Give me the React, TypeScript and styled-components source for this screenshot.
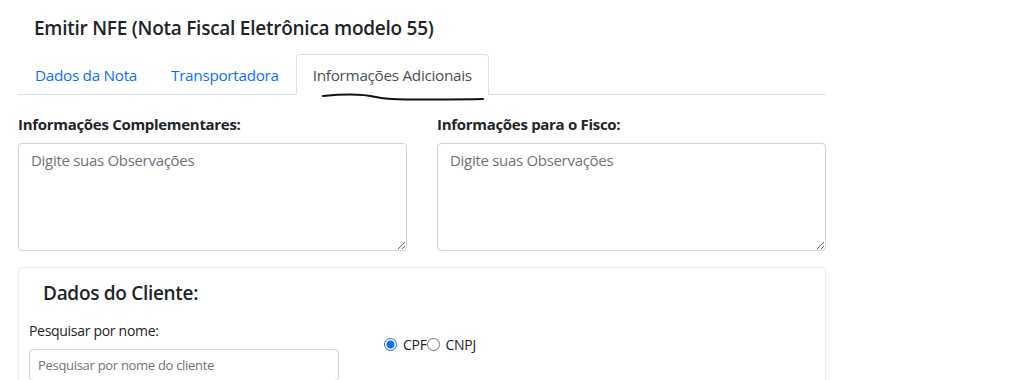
import { useState } from "react";
import styled, { createGlobalStyle } from "styled-components";

const GlobalStyle = createGlobalStyle`
  body {
    margin: 0;
    background: #fff;
    font-family: "Open Sans", "Noto Sans", sans-serif;
    color: #212529;
  }
  * { box-sizing: border-box; }
`;

const Page = styled.div`
  width: 808px;
  margin-left: 18px;
  padding-top: 13px;
`;

const Title = styled.h4`
  margin: 0 0 11px 16px;
  font-size: 19px;
  font-weight: 600;
  line-height: 30px;
  letter-spacing: -0.25px;
  color: #212529;
`;

const TabsWrap = styled.div`
  position: relative;
`;

const TabList = styled.ul`
  display: flex;
  margin: 0;
  padding: 0;
  list-style: none;
  border-bottom: 1px solid #dee2e6;
`;

const Tab = styled.li<{ $active?: boolean }>`
  margin-bottom: -1px;
  padding: 0 16px;
  height: 41px;
  display: flex;
  align-items: center;
  font-size: 15.3px;
  letter-spacing: -0.3px;
  color: ${({ $active }) => ($active ? "#495057" : "#0d6efd")};
  background: ${({ $active }) => ($active ? "#fff" : "transparent")};
  border: 1px solid ${({ $active }) => ($active ? "#dee2e6" : "transparent")};
  border-bottom-color: ${({ $active }) => ($active ? "#fff" : "transparent")};
  border-radius: 4px 4px 0 0;
  cursor: pointer;
`;

const Scribble = styled.svg`
  position: absolute;
  left: 300px;
  top: 35px;
  pointer-events: none;
`;

const Columns = styled.div`
  display: grid;
  grid-template-columns: 1fr 1fr;
  column-gap: 30px;
  margin-top: 17px;
`;

const Field = styled.div`
  display: flex;
  flex-direction: column;
`;

const BoldLabel = styled.label`
  font-size: 15px;
  font-weight: 700;
  letter-spacing: -0.3px;
  line-height: 24px;
  margin-bottom: 7px;
`;

const TextArea = styled.textarea`
  height: 108px;
  padding: 6px 12px;
  font-family: inherit;
  font-size: 15px;
  letter-spacing: -0.3px;
  color: #212529;
  border: 1px solid #ced4da;
  border-radius: 4px;
  resize: vertical;
  &::placeholder { color: #6c757d; }
`;

const Card = styled.section`
  margin-top: 16px;
  border: 1px solid #ececec;
  border-radius: 4px;
  padding: 10px 10px 20px 10px;
`;

const CardTitle = styled.h4`
  margin: 0 0 12px 14px;
  font-size: 19px;
  font-weight: 600;
  line-height: 30px;
  letter-spacing: -0.3px;
`;

const Row = styled.div`
  display: flex;
  align-items: flex-start;
  gap: 45px;
`;

const SearchField = styled.div`
  display: flex;
  flex-direction: column;
  width: 310px;
`;

const SmallLabel = styled.label`
  font-size: 14px;
  letter-spacing: -0.3px;
  line-height: 22px;
  margin-bottom: 7px;
`;

const Input = styled.input`
  height: 32px;
  padding: 4px 8px;
  font-family: inherit;
  font-size: 13px;
  letter-spacing: -0.3px;
  border: 1px solid #ced4da;
  border-radius: 4px;
  &::placeholder { color: #6c757d; }
`;

const RadioGroup = styled.div`
  display: flex;
  align-items: center;
  margin-top: 15px;
  font-size: 14px;
  letter-spacing: -0.3px;
`;

const RadioLabel = styled.label`
  display: flex;
  align-items: center;
  gap: 6px;
  color: #212529;
`;

const Radio = styled.input`
  width: 13px;
  height: 13px;
  margin: 0;
  accent-color: #0d6efd;
`;

export default function App() {
  const [doc, setDoc] = useState("cpf");
  return (
    <>
      <GlobalStyle />
      <Page>
        <Title>Emitir NFE (Nota Fiscal Eletrônica modelo 55)</Title>
        <TabsWrap>
          <TabList>
            <Tab>Dados da Nota</Tab>
            <Tab>Transportadora</Tab>
            <Tab $active>Informações Adicionais</Tab>
          </TabList>
          <Scribble width="190" height="16" viewBox="0 0 190 16">
            <path
              d="M5 7 C 25 5, 45 5, 58 8 C 70 11, 95 11, 165 10"
              fill="none"
              stroke="#111"
              strokeWidth="2"
              strokeLinecap="round"
            />
          </Scribble>
        </TabsWrap>
        <Columns>
          <Field>
            <BoldLabel>Informações Complementares:</BoldLabel>
            <TextArea placeholder="Digite suas Observações" />
          </Field>
          <Field>
            <BoldLabel>Informações para o Fisco:</BoldLabel>
            <TextArea placeholder="Digite suas Observações" />
          </Field>
        </Columns>
        <Card>
          <CardTitle>Dados do Cliente:</CardTitle>
          <Row>
            <SearchField>
              <SmallLabel>Pesquisar por nome:</SmallLabel>
              <Input placeholder="Pesquisar por nome do cliente" />
            </SearchField>
            <RadioGroup>
              <RadioLabel>
                <Radio type="radio" name="doc" checked={doc === "cpf"} onChange={() => setDoc("cpf")} />
                CPF
              </RadioLabel>
              <RadioLabel>
                <Radio type="radio" name="doc" checked={doc === "cnpj"} onChange={() => setDoc("cnpj")} />
                CNPJ
              </RadioLabel>
            </RadioGroup>
          </Row>
        </Card>
      </Page>
    </>
  );
}
